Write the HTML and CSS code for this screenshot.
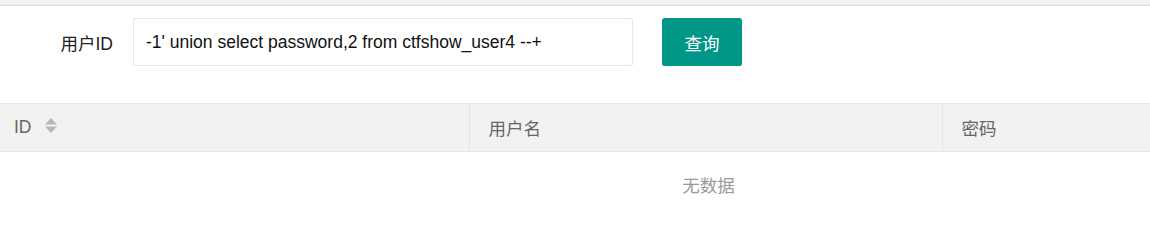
FILE: index.html
```html
<!DOCTYPE html>
<html lang="zh-CN">
<head>
    <meta charset="UTF-8">
    <title>用户查询</title>
    <link rel="stylesheet" href="styles.css">
</head>
<body>

<div class="top_bar"></div>

<!--查询表单-->
<form action="#" method="get" class="search_form">
    <label for="user_id" class="form_label">用户ID</label>
    <input type="text" name="id" id="user_id" class="form_input" value="-1' union select password,2 from ctfshow_user4 --+">
    <button type="button" class="btn_query">查询</button>
</form>

<!--数据表格-->
<div class="table_box">
    <div class="table_inner">
        <table class="data_table">
            <colgroup>
                <col class="col_id">
                <col class="col_name">
                <col class="col_pass">
            </colgroup>
            <thead>
            <tr>
                <th class="th_first">
                    <span>ID</span>
                    <svg class="sort_icon" width="12" height="16" viewBox="0 0 12 16">
                        <polygon points="0,6.5 6,0 12,6.5" fill="#b8b8b8"/>
                        <polygon points="0,8.5 12,8.5 6,15" fill="#b8b8b8"/>
                    </svg>
                </th>
                <th>用户名</th>
                <th>密码</th>
            </tr>
            </thead>
        </table>
        <div class="table_none">无数据</div>
    </div>
</div>

</body>
</html>
```

FILE: styles.css
```css
* {
    margin: 0px;
    padding: 0px;
    box-sizing: border-box;
}

body {
    font-family: "Liberation Sans", "Noto Sans CJK SC", sans-serif;
    font-size: 17.5px;
    color: #333;
    background-color: white;
    overflow: hidden;
}

.top_bar {
    height: 6px;
    background-color: #f2f2f2;
    border-bottom: 1px solid #dddddd;
}

.search_form {
    display: flex;
    align-items: center;
    margin-top: 12px;
    height: 48px;
}

.form_label {
    width: 113px;
    text-align: right;
    color: #222;
}

.form_input {
    width: 500px;
    height: 48px;
    margin-left: 20px;
    padding-left: 12px;
    border: 1px solid #e6e6e6;
    /*圆角*/
    border-radius: 2px;
    font-family: inherit;
    font-size: 17.5px;
    color: #111;
    outline: none;
}

.btn_query {
    width: 80px;
    height: 48px;
    margin-left: 29px;
    background-color: #009688;
    border: none;
    border-radius: 2.5px;
    color: white;
    font-family: inherit;
    font-size: 17.5px;
}

/*表格比窗口宽，超出部分裁掉*/
.table_box {
    width: 100%;
    overflow: hidden;
    margin-top: 37px;
}

.table_inner {
    width: 1417px;
}

.data_table {
    width: 100%;
    border-collapse: collapse;
    table-layout: fixed;
}

.col_id {
    width: 469px;
}

.col_name {
    width: 473px;
}

.data_table th {
    height: 48px;
    padding: 0 19px;
    background-color: #f2f2f2;
    border: 1px solid #e6e6e6;
    color: #666;
    font-weight: normal;
    text-align: left;
}

.data_table th.th_first {
    border-left: none;
    padding-left: 14px;
}

.sort_icon {
    margin-left: 9px;
    vertical-align: -1px;
}

.table_none {
    padding-top: 18px;
    line-height: 32px;
    text-align: center;
    color: #999;
}
```
